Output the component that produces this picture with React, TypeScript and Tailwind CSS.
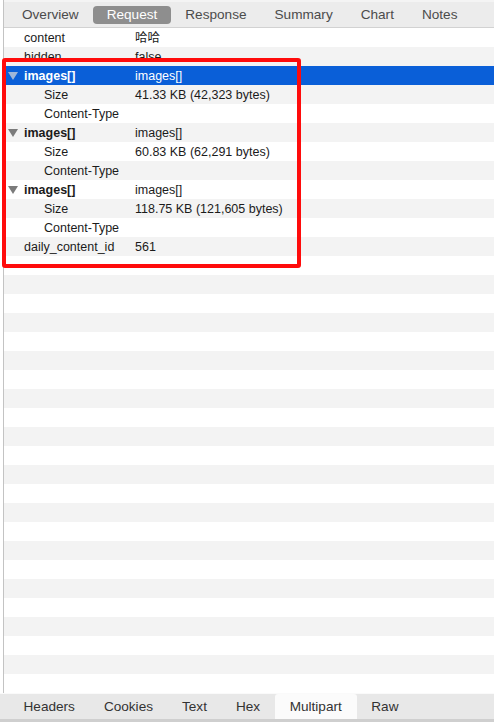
import React from "react";

type Row = { name: string; value?: string; kind: "plain" | "group" | "child"; selected?: boolean };

const rows: Row[] = [
  { name: "content", value: "哈哈", kind: "plain" },
  { name: "hidden", value: "false", kind: "plain" },
  { name: "images[]", value: "images[]", kind: "group", selected: true },
  { name: "Size", value: "41.33 KB (42,323 bytes)", kind: "child" },
  { name: "Content-Type", value: "", kind: "child" },
  { name: "images[]", value: "images[]", kind: "group" },
  { name: "Size", value: "60.83 KB (62,291 bytes)", kind: "child" },
  { name: "Content-Type", value: "", kind: "child" },
  { name: "images[]", value: "images[]", kind: "group" },
  { name: "Size", value: "118.75 KB (121,605 bytes)", kind: "child" },
  { name: "Content-Type", value: "", kind: "child" },
  { name: "daily_content_id", value: "561", kind: "plain" },
];

const topTabs = ["Overview", "Request", "Response", "Summary", "Chart", "Notes"];
const bottomTabs = ["Headers", "Cookies", "Text", "Hex", "Multipart", "Raw"];

function Triangle({ selected }: { selected?: boolean }) {
  return (
    <svg width="10" height="8" viewBox="0 0 10 8" className="absolute left-[4px] top-[6px]">
      <path d="M0 0 L10 0 L5 8 Z" fill={selected ? "#9fb6d8" : "#7b7b7b"} />
    </svg>
  );
}

export default function App() {
  const filler = Array.from({ length: 26 });
  return (
    <div
      className="relative w-[494px] h-[722px] overflow-hidden bg-white flex flex-col text-[#1b1b1b]"
      style={{ fontFamily: '"Liberation Sans", Arial, "Noto Sans CJK SC", sans-serif' }}
    >
      <div className="flex-1 min-h-0 flex flex-col ml-[3px] border-l border-[#c3c3c3] overflow-hidden">
        {/* top tab bar */}
        <div className="h-[28px] shrink-0 bg-[#ececec] border-t-2 border-t-[#f4f4f4] border-b border-b-[#d2d2d2] flex items-center pl-[4px]">
          {topTabs.map((t) => (
            <div
              key={t}
              className={
                t === "Request"
                  ? "h-[18px] px-[14px] rounded-[4px] bg-[#8e8e8e] text-white text-[13.6px] leading-[18px]"
                  : "h-[18px] px-[14px] text-[#4b4b4b] text-[13.6px] leading-[18px]"
              }
            >
              {t}
            </div>
          ))}
        </div>
        {/* rows */}
        <div className="flex-1 min-h-0 flex flex-col overflow-hidden">
          {rows.map((r, i) => {
            const bg = r.selected ? "bg-[#0a5fd8]" : i % 2 === 1 ? "bg-[#f3f3f3]" : "bg-white";
            const color = r.selected ? "text-white" : "text-[#1b1b1b]";
            return (
              <div key={i} className={`relative h-[19px] shrink-0 flex items-center pt-[2px] text-[12.5px] ${bg} ${color}`}>
                {r.kind === "group" && <Triangle selected={r.selected} />}
                <div className={`${r.kind === "child" ? "pl-[40px]" : "pl-[20px]"} w-[131px] shrink-0 whitespace-nowrap ${r.kind === "group" ? "font-bold" : ""}`}>
                  {r.name}
                </div>
                <div className="whitespace-nowrap">{r.value}</div>
              </div>
            );
          })}
          {filler.map((_, j) => (
            <div
              key={"f" + j}
              className={(rows.length + j) % 2 === 1 ? "h-[19px] shrink-0 bg-[#f3f3f3]" : "h-[19px] shrink-0 bg-white"}
            />
          ))}
        </div>
      </div>
      {/* bottom tab bar */}
      <div className="h-[29px] shrink-0 bg-[#e8e8e8] border-t border-t-[#fafafa] border-b-[3px] border-b-[#cfcfcf] flex items-stretch pl-[9px]">
        {bottomTabs.map((t) => (
          <div
            key={t}
            className={
              t === "Multipart"
                ? "pl-[15px] pr-[15px] flex items-center pt-[1px] bg-[#fbfbfb] rounded-t-[3px] text-[13.6px] text-[#333]"
                : "px-[14.5px] flex items-center pt-[1px] text-[13.6px] text-[#333]"
            }
          >
            {t}
          </div>
        ))}
      </div>
      {/* red highlight box */}
      <div className="absolute left-[2px] top-[58px] w-[299px] h-[210px] border-4 border-[#ff0b0b] rounded-[3px] pointer-events-none" />
    </div>
  );
}
